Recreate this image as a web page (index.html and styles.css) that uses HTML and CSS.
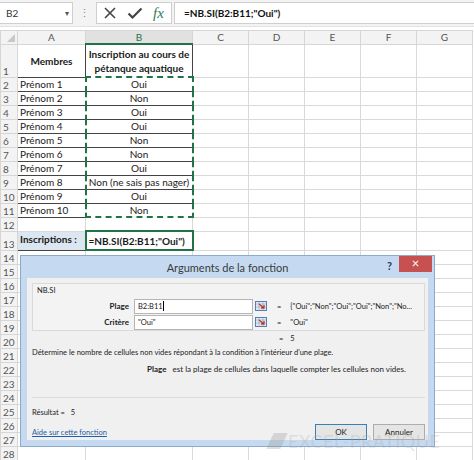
FILE: index.html
```html
<!DOCTYPE html>
<html lang="fr">
<head>
<meta charset="UTF-8" />
<title>NB.SI - Arguments de la fonction</title>
<link rel="stylesheet" href="styles.css">
</head>
<body>
<div class="sheet">
    <div class="formula-bar">
        <div class="name-box">B2<span class="caret">&#9662;</span></div>
        <div class="grip">&#8942;</div>
        <div class="fx-box">
            <svg width="14" height="14" viewBox="0 0 14 14"><path d="M2 2 L12 12 M12 2 L2 12" stroke="#444" stroke-width="1.6" fill="none"/></svg>
            <svg width="16" height="14" viewBox="0 0 16 14"><path d="M1.5 7.5 L5.5 11.5 L14.5 2.5" stroke="#444" stroke-width="2.2" fill="none"/></svg>
            <span class="fx">fx</span>
        </div>
        <div class="formula-input">=NB.SI(B2:B11;"Oui")</div>
    </div>

    <table class="grid">
        <colgroup>
            <col class="c-head"><col class="c-a"><col class="c-b">
            <col class="c-n"><col class="c-n"><col class="c-n"><col class="c-n"><col class="c-n">
        </colgroup>
        <tr class="r-head">
            <th class="corner"><span></span></th><th>A</th><th class="sel">B</th><th>C</th><th>D</th><th>E</th><th>F</th><th>G</th>
        </tr>
        <tr class="r-tall">
            <th>1</th>
            <td class="bx bold center">Membres</td>
            <td class="bx bold center">Inscription au cours de pétanque aquatique</td>
            <td></td><td></td><td></td><td></td><td></td>
        </tr>
        <tr><th>2</th><td class="bx">Prénom 1</td><td class="bx center ants ants-top">Oui</td><td></td><td></td><td></td><td></td><td></td></tr>
        <tr><th>3</th><td class="bx">Prénom 2</td><td class="bx center ants">Non</td><td></td><td></td><td></td><td></td><td></td></tr>
        <tr><th>4</th><td class="bx">Prénom 3</td><td class="bx center ants">Oui</td><td></td><td></td><td></td><td></td><td></td></tr>
        <tr><th>5</th><td class="bx">Prénom 4</td><td class="bx center ants">Oui</td><td></td><td></td><td></td><td></td><td></td></tr>
        <tr><th>6</th><td class="bx">Prénom 5</td><td class="bx center ants">Non</td><td></td><td></td><td></td><td></td><td></td></tr>
        <tr><th>7</th><td class="bx">Prénom 6</td><td class="bx center ants">Non</td><td></td><td></td><td></td><td></td><td></td></tr>
        <tr><th>8</th><td class="bx">Prénom 7</td><td class="bx center ants">Oui</td><td></td><td></td><td></td><td></td><td></td></tr>
        <tr><th>9</th><td class="bx">Prénom 8</td><td class="bx center ants">Non (ne sais pas nager)</td><td></td><td></td><td></td><td></td><td></td></tr>
        <tr><th>10</th><td class="bx">Prénom 9</td><td class="bx center ants">Oui</td><td></td><td></td><td></td><td></td><td></td></tr>
        <tr><th>11</th><td class="bx">Prénom 10</td><td class="bx center ants ants-bottom">Non</td><td></td><td></td><td></td><td></td><td></td></tr>
        <tr><th>12</th><td></td><td></td><td></td><td></td><td></td><td></td><td></td></tr>
        <tr class="r-mid">
            <th>13</th>
            <td class="bx bold total">Inscriptions :</td>
            <td class="active bold">=NB.SI(B2:B11;"Oui")</td>
            <td></td><td></td><td></td><td></td><td></td>
        </tr>
        <tr><th>14</th><td></td><td></td><td></td><td></td><td></td><td></td><td></td></tr>
        <tr><th>15</th><td></td><td></td><td></td><td></td><td></td><td></td><td></td></tr>
        <tr><th>16</th><td></td><td></td><td></td><td></td><td></td><td></td><td></td></tr>
        <tr><th>17</th><td></td><td></td><td></td><td></td><td></td><td></td><td></td></tr>
        <tr><th>18</th><td></td><td></td><td></td><td></td><td></td><td></td><td></td></tr>
        <tr><th>19</th><td></td><td></td><td></td><td></td><td></td><td></td><td></td></tr>
        <tr><th>20</th><td></td><td></td><td></td><td></td><td></td><td></td><td></td></tr>
        <tr><th>21</th><td></td><td></td><td></td><td></td><td></td><td></td><td></td></tr>
        <tr><th>22</th><td></td><td></td><td></td><td></td><td></td><td></td><td></td></tr>
        <tr><th>23</th><td></td><td></td><td></td><td></td><td></td><td></td><td></td></tr>
        <tr><th>24</th><td></td><td></td><td></td><td></td><td></td><td></td><td></td></tr>
        <tr><th>25</th><td></td><td></td><td></td><td></td><td></td><td></td><td></td></tr>
        <tr><th>26</th><td></td><td></td><td></td><td></td><td></td><td></td><td></td></tr>
        <tr><th>27</th><td></td><td></td><td></td><td></td><td></td><td></td><td></td></tr>
        <tr><th>28</th><td></td><td></td><td></td><td></td><td></td><td></td><td></td></tr>
    </table>

    <!-- Function arguments dialog, floats over the sheet -->
    <div class="dialog">
        <div class="dialog-title">
            <span class="title-text">Arguments de la fonction</span>
            <span class="help">?</span>
            <span class="close">&#215;</span>
        </div>
        <div class="dialog-body">
            <div class="group">
                <div class="fn-name">NB.SI</div>
                <div class="arg-row">
                    <span class="arg-label">Plage</span>
                    <span class="arg-input">B2:B11<span class="cursor"></span></span>
                    <span class="ref-btn"><svg width="12" height="10" viewBox="0 0 12 10"><rect x="0.5" y="0.5" width="11" height="9" fill="#dfe9f5" stroke="#5a7fae"/><path d="M1 3 H11 M1 6 H11 M4 1 V9 M8 1 V9" stroke="#8fa9c8" stroke-width="0.6"/><path d="M4 3 L9 7 M9 4 L9 7 L6 7" stroke="#c0392b" stroke-width="1.3" fill="none"/></svg></span>
                    <span class="eq">=</span>
                    <span class="arg-value">{"Oui";"Non";"Oui";"Oui";"Non";"No...</span>
                </div>
                <div class="arg-row">
                    <span class="arg-label">Critère</span>
                    <span class="arg-input">"Oui"</span>
                    <span class="ref-btn"><svg width="12" height="10" viewBox="0 0 12 10"><rect x="0.5" y="0.5" width="11" height="9" fill="#dfe9f5" stroke="#5a7fae"/><path d="M1 3 H11 M1 6 H11 M4 1 V9 M8 1 V9" stroke="#8fa9c8" stroke-width="0.6"/><path d="M4 3 L9 7 M9 4 L9 7 L6 7" stroke="#c0392b" stroke-width="1.3" fill="none"/></svg></span>
                    <span class="eq">=</span>
                    <span class="arg-value">"Oui"</span>
                </div>
            </div>
            <div class="result-line"><span class="eq">=</span> 5</div>
            <p class="desc">Détermine le nombre de cellules non vides répondant à la condition à l'intérieur d'une plage.</p>
            <p class="arg-desc"><b>Plage</b>&nbsp;&nbsp; est la plage de cellules dans laquelle compter les cellules non vides.</p>
            <div class="separator"></div>
            <div class="dialog-foot">
                <div class="foot-left">
                    <div class="resultat">Résultat =&nbsp;&nbsp; 5</div>
                    <a class="help-link" href="#">Aide sur cette fonction</a>
                </div>
                <div class="buttons">
                    <button class="btn default">OK</button>
                    <button class="btn">Annuler</button>
                </div>
            </div>
        </div>
    </div>

    <div class="watermark"><span class="wm-logo"></span>EXCEL-PRATIQUE</div>
</div>
</body>
</html>
```

FILE: styles.css
```css
/* Excel-like sheet */
body {
    margin: 0;
    font-family: Lato, 'Liberation Sans', sans-serif;
    background: #fff;
    color: #222;
}

.sheet {
    position: relative;
    width: 474px;
    height: 460px;
    overflow: hidden;
}

/* Formula bar */
.formula-bar {
    display: flex;
    align-items: center;
    height: 26px;
    background: #f3f3f3;
    border-bottom: 1px solid #e2e2e2;
    margin-bottom: 3px;
}

.name-box {
    position: relative;
    width: 66px;
    height: 20px;
    line-height: 20px;
    padding-left: 6px;
    background: #fff;
    border: 1px solid #cfcfcf;
    border-left: none;
    font-size: 10px;
    color: #333;
}

.caret {
    position: absolute;
    right: 3px;
    top: 0;
    font-size: 8px;
    color: #555;
}

.grip {
    width: 23px;
    text-align: center;
    font-size: 11px;
    color: #888;
}

.fx-box {
    display: flex;
    align-items: center;
    gap: 10px;
    width: 68px;
    height: 20px;
    padding-left: 6px;
    background: #fff;
    border: 1px solid #cfcfcf;
}

.fx {
    font-family: 'Liberation Serif', serif;
    font-style: italic;
    font-size: 15px;
    color: #2e7d5b;
}

.formula-input {
    flex: 1;
    height: 20px;
    line-height: 20px;
    margin-left: 2px;
    padding-left: 9px;
    background: #fff;
    border: 1px solid #cfcfcf;
    border-right: none;
    font-size: 10px;
    font-weight: bold;
    color: #111;
}

/* Grid */
.grid {
    border-collapse: collapse;
    table-layout: fixed;
    width: 472px;
    font-size: 10px;
}

.c-head { width: 17px; }
.c-a { width: 68px; }
.c-b { width: 107px; }
.c-n { width: 56px; }

.grid tr { height: 14px; }
.grid tr.r-head { height: 13px; }
.grid tr.r-tall { height: 33px; }
.grid tr.r-mid { height: 19px; }

.grid th {
    background: #f3f3f3;
    border: 1px solid #d6d6d6;
    font-weight: normal;
    font-size: 10px;
    color: #555;
    padding: 0;
    line-height: 12px;
}

.grid tr th:first-child {
    text-align: left;
    padding-left: 2px;
    vertical-align: bottom;
}

.grid .r-head th { text-align: center; }

.grid .r-head th.sel {
    background: #e1e1e1;
    color: #217346;
    border-bottom: 2px solid #217346;
}

.grid th.corner { position: relative; }

.corner span {
    position: absolute;
    right: 2px;
    bottom: 2px;
    border-left: 8px solid transparent;
    border-bottom: 8px solid #c8c8c8;
}

.grid td {
    border: 1px solid #d9d9d9;
    padding: 0 2px;
    line-height: 12px;
    white-space: nowrap;
    overflow: hidden;
    color: #1a1a1a;
}

.grid td.bx { border: 1px solid #444; }
.grid td.bold { font-weight: bold; }
.grid td.center { text-align: center; }
.grid .r-tall td { white-space: normal; line-height: 14px; }
.grid .r-tall td.bold { padding: 0 1px; }

/* marching ants around B2:B11 */
.grid td.ants {
    border-left: 2px dashed #217346;
    border-right: 2px dashed #217346;
}
.grid td.ants-top { border-top: 2px dashed #217346; }
.grid td.ants-bottom { border-bottom: 2px dashed #217346; }

.grid td.total {
    background: #dce6f1;
    vertical-align: top;
    padding-top: 1px;
}

.grid td.active {
    border: 2px solid #217346;
    padding-left: 2px;
}

/* Dialog */
.dialog {
    position: absolute;
    left: 20px;
    top: 255px;
    width: 413px;
    height: 190px;
    background: #c5daf0;
    border: 1px solid #8eaacb;
    display: flex;
    flex-direction: column;
}

.dialog-title {
    position: relative;
    height: 22px;
    display: flex;
    align-items: center;
    justify-content: center;
}

.title-text {
    font-size: 11px;
    color: #3a3a3a;
}

.help {
    position: absolute;
    right: 42px;
    top: 3px;
    font-size: 11px;
    font-weight: bold;
    color: #2b3a4f;
}

.close {
    position: absolute;
    right: 2px;
    top: 0;
    width: 33px;
    height: 16px;
    line-height: 15px;
    background: #c75050;
    color: #fff;
    font-size: 13px;
    text-align: center;
}

.dialog-body {
    flex: 1;
    margin: 0 6px 6px;
    background: #f0f0f0;
    padding: 5px 3px 0 5px;
    font-size: 7.5px;
    color: #222;
}

.group {
    height: 46px;
    border: 1px solid #dadada;
    background: #f3f3f3;
}

.fn-name {
    padding: 2px 0 0 4px;
    height: 12px;
    line-height: 10px;
}

.arg-row {
    display: flex;
    align-items: center;
    height: 16px;
}

.arg-label {
    width: 96px;
    text-align: right;
    font-weight: bold;
    font-size: 8px;
}

.arg-input {
    display: flex;
    align-items: center;
    width: 114px;
    height: 13px;
    margin-left: 5px;
    padding-left: 3px;
    background: #fff;
    border: 1px solid #b5b5b5;
}

.cursor {
    width: 1px;
    height: 10px;
    background: #000;
}

.ref-btn {
    display: flex;
    align-items: center;
    justify-content: center;
    width: 15px;
    height: 15px;
}

.eq {
    margin: 0 9px 0 9px;
}

.result-line {
    padding-left: 238px;
    margin-top: 3px;
    height: 12px;
}

.result-line .eq { margin-right: 5px; }

.desc {
    margin: 2px 0 0;
    height: 14px;
}

.arg-desc {
    margin: 2px 0 0;
    padding-left: 115px;
    font-size: 8px;
}

.separator {
    margin: 23px 0 0;
    border-top: 1px solid #dcdcdc;
}

.dialog-foot {
    display: flex;
    justify-content: space-between;
    margin-top: 10px;
}

.resultat {
    height: 14px;
}

.help-link {
    display: block;
    margin-top: 6px;
    color: #1f5ea8;
    text-decoration: underline;
}

.buttons {
    display: flex;
    gap: 6px;
    margin-top: 16px;
}

.btn {
    width: 52px;
    height: 16px;
    padding: 0;
    font-family: Lato, 'Liberation Sans', sans-serif;
    font-size: 8px;
    color: #222;
    background: #e5e5e5;
    border: 1px solid #adadad;
}

.btn.default { border-color: #3c7fb1; }

/* Faded site watermark */
.watermark {
    position: absolute;
    left: 270px;
    top: 430px;
    display: flex;
    align-items: center;
    gap: 4px;
    white-space: nowrap;
    font-size: 18px;
    letter-spacing: 0.5px;
    color: rgba(170, 170, 170, 0.3);
    pointer-events: none;
}

.wm-logo {
    width: 14px;
    height: 16px;
    background: rgba(150, 150, 150, 0.3);
    transform: skewX(-25deg);
}
```
